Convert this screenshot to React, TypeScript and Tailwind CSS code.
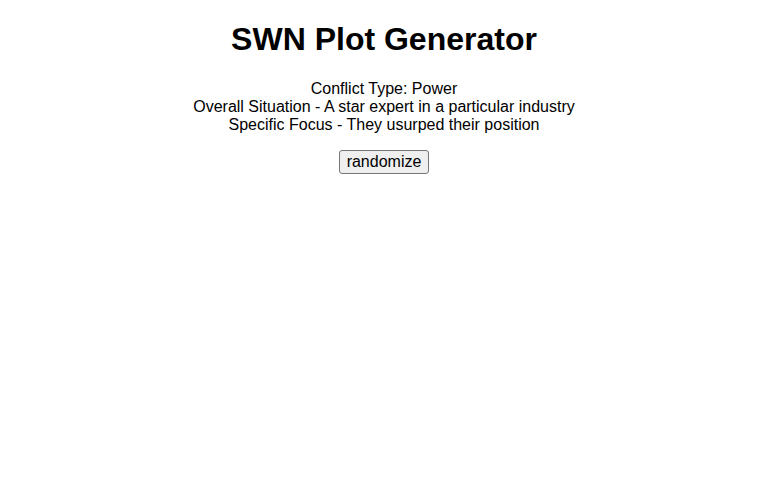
import { useState } from 'react';

const situations = [
  { type: 'Power', overall: 'A star expert in a particular industry', focus: 'They usurped their position' },
];

export default function App() {
  const [plot] = useState(situations[0]);

  return (
    <div className="min-h-screen bg-white text-black text-center font-['Liberation_Sans',Arial,sans-serif]">
      <h1 className="text-[32px] font-bold leading-[normal] pt-[21px] pb-[22px]">SWN Plot Generator</h1>
      <div className="text-base leading-[normal]">
        <div>Conflict Type: {plot.type}</div>
        <div>Overall Situation - {plot.overall}</div>
        <div>Specific Focus - {plot.focus}</div>
      </div>
      <div className="mt-4">
        <button className="text-base leading-[normal] px-[7px] py-[2px] border border-[#767676] bg-[#efefef] rounded-[3px] text-black">
          randomize
        </button>
      </div>
    </div>
  );
}
